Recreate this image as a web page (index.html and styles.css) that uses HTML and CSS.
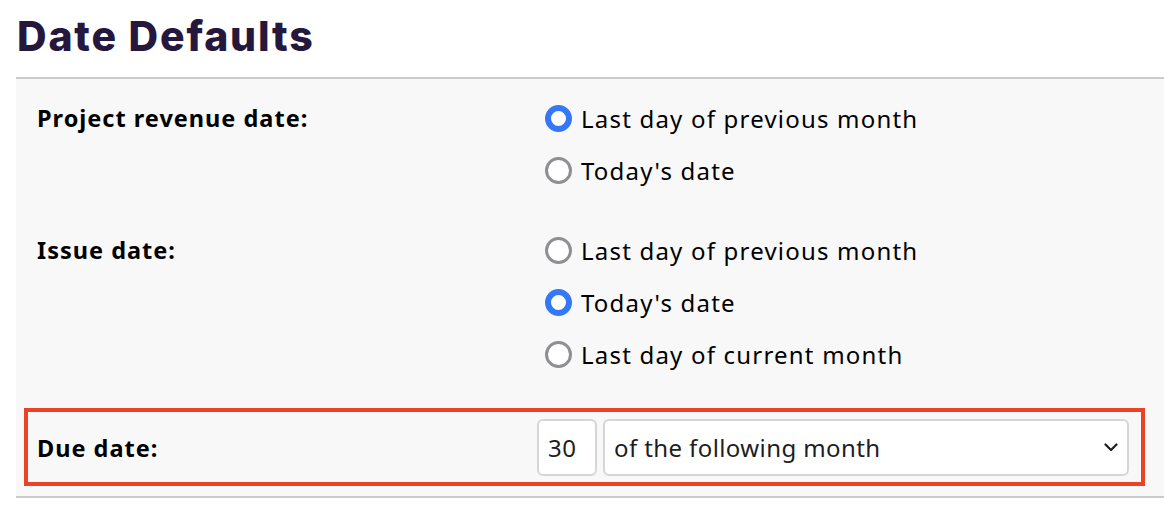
FILE: index.html
```html
<!DOCTYPE html>
<html lang="en">
<head>
  <meta charset="UTF-8">
  <title>Date Defaults</title>
  <link rel="stylesheet" href="styles.css">
</head>
<body>

<h1 class="title">Date Defaults</h1>

<div class="panel">
  <div class="row">
    <div class="label">Project revenue date:</div>
    <div class="options">
      <label class="option"><input type="radio" name="revenue" checked> Last day of previous month</label>
      <label class="option"><input type="radio" name="revenue"> Today's date</label>
    </div>
  </div>

  <div class="row">
    <div class="label">Issue date:</div>
    <div class="options">
      <label class="option"><input type="radio" name="issue"> Last day of previous month</label>
      <label class="option"><input type="radio" name="issue" checked> Today's date</label>
      <label class="option"><input type="radio" name="issue"> Last day of current month</label>
    </div>
  </div>

  <div class="row due">
    <div class="label">Due date:</div>
    <div class="due-fields">
      <input class="day" type="text" value="30">
      <div class="select">
        <span>of the following month</span>
        <svg class="chevron" width="14" height="9" viewBox="0 0 14 9">
          <path d="M1.5 1.5 L7 7 L12.5 1.5" fill="none" stroke="#1d1d24" stroke-width="2.2" stroke-linecap="round" stroke-linejoin="round"/>
        </svg>
      </div>
    </div>
  </div>
</div>

</body>
</html>
```

FILE: styles.css
```css
body {
  margin: 0;
  background-color: #fff;
  font-family: "Noto Sans", "Open Sans", sans-serif;
  color: #000;
}

.title {
  margin: 0;
  padding: 12px 0 0 17px;
  height: 63px;
  box-sizing: border-box;
  font-family: Inter, sans-serif;
  font-weight: 800;
  font-size: 41px;
  line-height: 48px;
  letter-spacing: 1.8px;
  color: #26183c; /* dark purple */
}

/* Panel */
.panel {
  margin-left: 16px;
  margin-top: 14px;
  padding-top: 13px;
  background-color: #f8f8f8;
  border-top: 2px solid #cbcbcb;
  border-bottom: 2px solid #cbcbcb;
  height: 421px;
  box-sizing: border-box;
}

.row {
  display: grid;
  grid-template-columns: 500px 1fr;
  padding-left: 21px;
  margin-bottom: 28px;
}

.label {
  font-weight: 700;
  font-size: 23.5px;
  line-height: 52px;
  letter-spacing: 1px;
}

.options {
  display: flex;
  flex-direction: column;
}

.option {
  display: flex;
  align-items: center;
  height: 52px;
  font-size: 24px;
  letter-spacing: 1.2px;
  cursor: pointer;
}

.option input {
  appearance: none;
  -webkit-appearance: none;
  margin: 0 9px 0 8px;
  width: 27px;
  height: 27px;
  border-radius: 50%;
  border: 3px solid #8e8e93;
  background-color: #fff;
  box-sizing: border-box;
}

.option input:checked {
  border: 6px solid #3478f6; /* blue */
}

/* Due date row */
.row.due {
  margin: 21px 19px 0 8px;
  padding: 7px 12px 6px 9px;
  border: 4px solid #ea4127; /* red highlight */
  align-items: center;
}

.due-fields {
  display: flex;
  gap: 6px;
}

.day {
  width: 60px;
  height: 57px;
  box-sizing: border-box;
  border: 2px solid #d6d6d6;
  border-radius: 6px;
  background: #fff;
  font-family: "Noto Sans", sans-serif;
  font-size: 24px;
  letter-spacing: 0.5px;
  color: #1d1d24;
  text-align: left;
  padding: 0 0 0 9px;
}

.select {
  flex: 1;
  height: 57px;
  box-sizing: border-box;
  border: 2px solid #d6d6d6;
  border-radius: 6px;
  background: #fff;
  display: flex;
  align-items: center;
  justify-content: space-between;
  padding: 0 9px 0 9px;
  font-size: 24px;
  letter-spacing: 0.4px;
  color: #1d1d24;
}
```
